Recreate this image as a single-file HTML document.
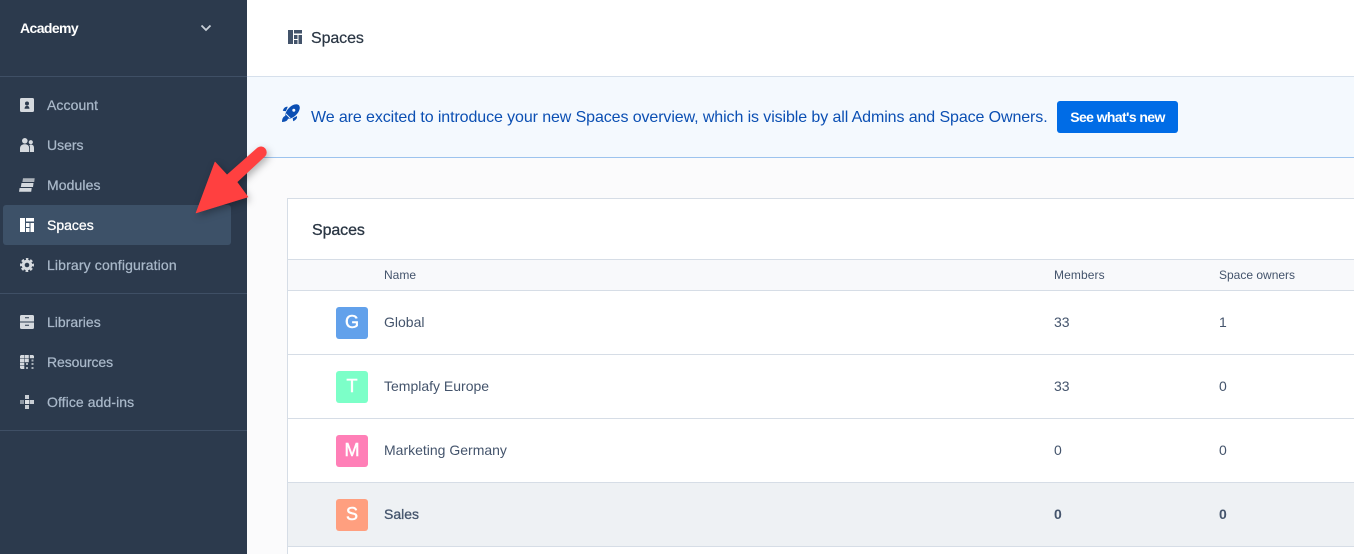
<!DOCTYPE html>
<html><head><meta charset="utf-8">
<style>
html,body{margin:0;padding:0;width:1354px;height:554px;overflow:hidden;background:#fff;font-family:"Liberation Sans",sans-serif;}
.a{position:absolute;white-space:nowrap;}
.line{position:absolute;height:1px;}
.nav{position:absolute;left:47px;font-size:14px;line-height:20px;color:#a9b8c9;white-space:nowrap;-webkit-text-stroke:.25px #a9b8c9;}
.ic{position:absolute;left:20px;width:14px;height:14px;}
.cell{position:absolute;font-size:14px;line-height:20px;color:#44546c;white-space:nowrap;}
.th{position:absolute;font-size:12px;line-height:16px;top:267px;color:#44546c;white-space:nowrap;}
.av{position:absolute;left:336px;width:32px;height:32px;border-radius:3px;color:#fff;font-size:18px;-webkit-text-stroke:.5px #fff;line-height:31px;text-align:center;}
</style></head><body>
<div class="a" style="left:0;top:0;width:247px;height:554px;background:#2c3a4d"></div>
<div class="a" style="left:20px;top:18px;font-size:14px;line-height:20px;font-weight:bold;color:#fff;letter-spacing:-.6px">Academy</div>
<svg class="a" style="left:200px;top:24px" width="12" height="8" viewBox="0 0 12 8"><path d="M1.500 1.500L6 6l4.500-4.500" fill="none" stroke="#c9d0d8" stroke-width="1.800"/></svg>
<div class="line" style="left:0;top:76px;width:247px;background:#3f4f65"></div>
<div class="line" style="left:0;top:293px;width:247px;background:#3f4f65"></div>
<div class="line" style="left:0;top:430px;width:247px;background:#3f4f65"></div>
<div class="a" style="left:3px;top:205px;width:228px;height:40px;background:#3d5168;border-radius:3px"></div>

<svg class="ic" style="top:98px" viewBox="0 0 14 14"><rect width="14" height="14" rx="1.500" fill="#d5d9de"/><circle cx="7" cy="5.500" r="2" fill="#2c3a4d"/><path d="M4.500 10.800c.2-2 1-3 2.500-3s2.300 1 2.500 3z" fill="#2c3a4d"/></svg>
<div class="nav" style="top:95px;letter-spacing:.08px">Account</div>
<svg class="ic" style="top:138px" viewBox="0 0 14 14"><circle cx="4.800" cy="2.800" r="2.800" fill="#d5d9de"/><circle cx="10.800" cy="4.200" r="2.100" fill="#d5d9de"/><path d="M0 14V10.500C0 7.500 2 6.200 4.800 6.200S9.200 7.500 9.200 10.500V14z" fill="#d5d9de"/><path d="M10 14V9.500c0-.8-.2-1.500-.7-2.200.5-.5 1-.7 1.700-.7 2 0 3 1.300 3 3.500V14z" fill="#d5d9de"/></svg>
<div class="nav" style="top:135px">Users</div>
<svg class="ic" style="top:178px;left:19px;width:16px" viewBox="0 0 16 14"><path d="M4 .3h11.700L15.200 4H3.400z" fill="#aeb4bc"/><path d="M2.500 5H14.500L14 9H1.800z" fill="#d5d9de"/><path d="M.6 10H12.700l-.5 3.800H0z" fill="#d5d9de"/></svg>
<div class="nav" style="top:175px;letter-spacing:.1px">Modules</div>
<svg class="ic" style="top:218px" viewBox="0 0 14 14"><path d="M0 0h5v14H0zM6 0h8v3.500H6zM6 5h3.500v4H6zM10.500 5H14v9h-3.500zM6 10h3.500v4H6z" fill="#fff"/></svg>
<div class="nav" style="top:215px;color:#fff;-webkit-text-stroke:.3px #fff">Spaces</div>
<svg class="ic" style="top:258px" viewBox="0 0 14 14"><circle cx="7" cy="7" r="5.300" fill="#d5d9de"/><circle cx="7" cy="7" r="6" fill="none" stroke="#d5d9de" stroke-width="2" stroke-dasharray="2.700 2.012" stroke-dashoffset="1.350" transform="rotate(-90 7 7)"/><circle cx="7" cy="7" r="2.300" fill="#2c3a4d"/></svg>
<div class="nav" style="top:255px;letter-spacing:.14px">Library configuration</div>
<svg class="ic" style="top:315px" viewBox="0 0 14 14"><path d="M1.500 0h11A1.500 1.500 0 0 1 14 1.500V6.500H0V1.500A1.500 1.500 0 0 1 1.500 0zM0 7.500h14v5a1.500 1.500 0 0 1-1.500 1.500h-11A1.500 1.500 0 0 1 0 12.500z" fill="#d5d9de"/><path d="M5 2.300h4v1H5zM5 9.800h4v1H5z" fill="#2c3a4d"/></svg>
<div class="nav" style="top:312px">Libraries</div>
<svg class="ic" style="top:355px" viewBox="0 0 14 14"><path d="M1 0h3.300v3.300H0V1zM4.800 0h4v3.300h-4zM9.800 0H13l1 1v2.300h-4.200zM0 3.800h4.300v3.400H0zM4.800 3.800h4v3.400h-4zM0 7.700h4.300v2.800H0z" fill="#d5d9de"/><path d="M11.500 4.500h2v2h-2zM6 8h2v2H6zM11.500 8h2v2h-2zM6 12h2v2H6zM11.500 12h2v2h-2z" fill="#a8b0b9"/><path d="M0 11h4.300v3H1l-1-1z" fill="#d5d9de"/></svg>
<div class="nav" style="top:352px;letter-spacing:-.1px">Resources</div>
<svg class="ic" style="top:395px" viewBox="0 0 14 14"><path d="M5 0h4v4H5zM5 10h4v4H5zM9.500 5H14v4H9.500z" fill="#c9ced4"/><path d="M0 5h4v4H0z" fill="#8d97a3"/><path d="M5 5h4v4H5z" fill="#dfe2e6"/></svg>
<div class="nav" style="top:392px;letter-spacing:.08px">Office add-ins</div>

<!-- top bar -->
<svg class="a" style="left:288px;top:30px" width="14" height="14" viewBox="0 0 14 14"><path d="M0 0h5v14H0zM6 0h8v3.500H6zM6 5h3.500v4H6zM10.500 5H14v9h-3.500zM6 10h3.500v4H6z" fill="#43536a"/></svg>
<div class="a" style="left:311px;top:29px;font-size:16px;line-height:20px;color:#2a3644;-webkit-text-stroke:.2px #2a3644;letter-spacing:-.1px">Spaces</div>
<div class="line" style="left:247px;top:76px;width:1107px;background:#d6e0ec"></div>

<!-- banner -->
<div class="a" style="left:247px;top:77px;width:1107px;height:80px;background:#f4f9fe"></div>
<div class="line" style="left:247px;top:157px;width:1107px;background:#9cc3ee"></div>
<svg class="a" style="left:282px;top:104px" width="18" height="18" viewBox="0 0 18 18"><ellipse cx="10.500" cy="7.500" rx="9" ry="5" transform="rotate(-45 10.500 7.500)" fill="#0b4fb3"/><path d="M5.800 2.800C3.800 2.500 1.800 3.500.8 6.800l3 .4zM15 12c.3 2-.7 4-3.800 5.200l-.5-3z" fill="#0b4fb3"/><path d="M3.200 12C1 12.500 0 15 0 18c3 0 5.500-1 6-3.200z" fill="#0b4fb3"/><path d="M3.800 9.800l4.400 4.400" stroke="#f4f9fe" stroke-width="1"/><circle cx="11.800" cy="6.200" r="1.500" fill="#f4f9fe"/></svg>
<div class="a" id="bt" style="left:311px;top:108px;font-size:16px;line-height:20px;color:#0b4fb3;letter-spacing:-.1px">We are excited to introduce your new Spaces overview, which is visible by all Admins and Space Owners.</div>
<div class="a" style="left:1057px;top:101px;width:121px;height:32px;background:#006ce6;border-radius:3px;color:#fff;font-size:14px;font-weight:bold;line-height:32px;text-align:center;letter-spacing:-.6px">See what's new</div>

<!-- page bg -->
<div class="a" style="left:247px;top:158px;width:1107px;height:396px;background:#fbfbfc"></div>

<!-- card -->
<div class="a" style="left:287px;top:198px;width:1067px;height:356px;background:#fff;border-left:1px solid #d6dde6;border-top:1px solid #d6dde6;box-sizing:border-box"></div>
<div class="a" style="left:312px;top:221px;font-size:16px;line-height:20px;color:#2a3644;-webkit-text-stroke:.3px #2a3644;letter-spacing:-.1px">Spaces</div>
<div class="a" style="left:288px;top:259px;width:1066px;height:32px;background:#f8f9fb;border-top:1px solid #d6dde6;border-bottom:1px solid #d6dde6;box-sizing:border-box"></div>
<div class="th" style="left:384px">Name</div>
<div class="th" style="left:1054px;letter-spacing:.1px">Members</div>
<div class="th" style="left:1219px">Space owners</div>

<div class="line" style="left:288px;top:354px;width:1066px;background:#d6dde6"></div>
<div class="line" style="left:288px;top:418px;width:1066px;background:#d6dde6"></div>
<div class="a" style="left:288px;top:482px;width:1066px;height:65px;background:#eef1f4;border-top:1px solid #d6dde6;border-bottom:1px solid #d6dde6;box-sizing:border-box"></div>

<div class="av" style="top:307px;background:#62a1eb">G</div>
<div class="cell" style="left:384px;top:312px">Global</div>
<div class="cell" style="left:1054px;top:312px">33</div>
<div class="cell" style="left:1219px;top:312px">1</div>

<div class="av" style="top:371px;background:#7cffc8">T</div>
<div class="cell" style="left:384px;top:376px">Templafy Europe</div>
<div class="cell" style="left:1054px;top:376px">33</div>
<div class="cell" style="left:1219px;top:376px">0</div>

<div class="av" style="top:435px;background:#ff7fb7">M</div>
<div class="cell" style="left:384px;top:440px">Marketing Germany</div>
<div class="cell" style="left:1054px;top:440px">0</div>
<div class="cell" style="left:1219px;top:440px">0</div>

<div class="av" style="top:499px;background:#ff9f7f">S</div>
<div class="cell" style="left:384px;top:504px;-webkit-text-stroke:.3px #44546c">Sales</div>
<div class="cell" style="left:1054px;top:504px;font-weight:bold">0</div>
<div class="cell" style="left:1219px;top:504px;font-weight:bold">0</div>

<!-- arrow -->
<svg class="a" style="left:185px;top:140px;filter:drop-shadow(2px 3px 4px rgba(0,0,0,.3))" width="90" height="85" viewBox="185 140 90 85"><path d="M196 213L215 162L227 175L257.500 148A5.500 5.500 0 0 1 265 156L237 182L248 197Z" fill="#ff4040" stroke="#ff4040" stroke-width=".6" stroke-linejoin="round"/></svg>
</body></html>
